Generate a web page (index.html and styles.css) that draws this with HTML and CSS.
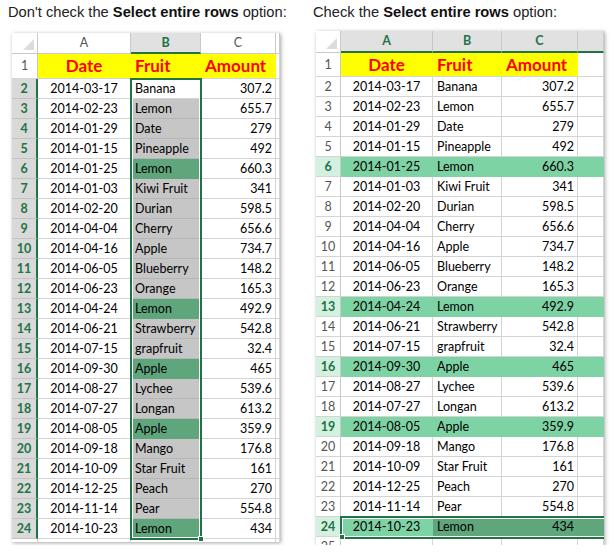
FILE: index.html
```html
<!DOCTYPE html>
<html>
<head>
<meta charset="utf-8">
<link rel="stylesheet" href="styles.css">
</head>
<body>
<div class="page">
  <section class="panel panel-l">
    <p class="caption">Don't check the <b>Select entire rows</b> option:</p>
    <div class="sheet sheet-l">
      <div class="r hdr"><div class="c corner"><span class="tri"></span></div><div class="c hc">A</div><div class="c hc on">B</div><div class="c hc">C</div><div class="c hc x"></div></div>
      <div class="r r1"><div class="c n">1</div><div class="c t tc">Date</div><div class="c t">Fruit</div><div class="c t">Amount</div><div class="c x"></div></div>
      <div class="r s act"><div class="c n">2</div><div class="c d">2014-03-17</div><div class="c f">Banana</div><div class="c a">307.2</div><div class="c x"></div></div>
      <div class="r s"><div class="c n">3</div><div class="c d">2014-02-23</div><div class="c f">Lemon</div><div class="c a">655.7</div><div class="c x"></div></div>
      <div class="r s"><div class="c n">4</div><div class="c d">2014-01-29</div><div class="c f">Date</div><div class="c a">279</div><div class="c x"></div></div>
      <div class="r s"><div class="c n">5</div><div class="c d">2014-01-15</div><div class="c f">Pineapple</div><div class="c a">492</div><div class="c x"></div></div>
      <div class="r s g"><div class="c n">6</div><div class="c d">2014-01-25</div><div class="c f">Lemon</div><div class="c a">660.3</div><div class="c x"></div></div>
      <div class="r s"><div class="c n">7</div><div class="c d">2014-01-03</div><div class="c f">Kiwi Fruit</div><div class="c a">341</div><div class="c x"></div></div>
      <div class="r s"><div class="c n">8</div><div class="c d">2014-02-20</div><div class="c f">Durian</div><div class="c a">598.5</div><div class="c x"></div></div>
      <div class="r s"><div class="c n">9</div><div class="c d">2014-04-04</div><div class="c f">Cherry</div><div class="c a">656.6</div><div class="c x"></div></div>
      <div class="r s"><div class="c n">10</div><div class="c d">2014-04-16</div><div class="c f">Apple</div><div class="c a">734.7</div><div class="c x"></div></div>
      <div class="r s"><div class="c n">11</div><div class="c d">2014-06-05</div><div class="c f">Blueberry</div><div class="c a">148.2</div><div class="c x"></div></div>
      <div class="r s"><div class="c n">12</div><div class="c d">2014-06-23</div><div class="c f">Orange</div><div class="c a">165.3</div><div class="c x"></div></div>
      <div class="r s g"><div class="c n">13</div><div class="c d">2014-04-24</div><div class="c f">Lemon</div><div class="c a">492.9</div><div class="c x"></div></div>
      <div class="r s"><div class="c n">14</div><div class="c d">2014-06-21</div><div class="c f">Strawberry</div><div class="c a">542.8</div><div class="c x"></div></div>
      <div class="r s"><div class="c n">15</div><div class="c d">2014-07-15</div><div class="c f">grapfruit</div><div class="c a">32.4</div><div class="c x"></div></div>
      <div class="r s g"><div class="c n">16</div><div class="c d">2014-09-30</div><div class="c f">Apple</div><div class="c a">465</div><div class="c x"></div></div>
      <div class="r s"><div class="c n">17</div><div class="c d">2014-08-27</div><div class="c f">Lychee</div><div class="c a">539.6</div><div class="c x"></div></div>
      <div class="r s"><div class="c n">18</div><div class="c d">2014-07-27</div><div class="c f">Longan</div><div class="c a">613.2</div><div class="c x"></div></div>
      <div class="r s g"><div class="c n">19</div><div class="c d">2014-08-05</div><div class="c f">Apple</div><div class="c a">359.9</div><div class="c x"></div></div>
      <div class="r s"><div class="c n">20</div><div class="c d">2014-09-18</div><div class="c f">Mango</div><div class="c a">176.8</div><div class="c x"></div></div>
      <div class="r s"><div class="c n">21</div><div class="c d">2014-10-09</div><div class="c f">Star Fruit</div><div class="c a">161</div><div class="c x"></div></div>
      <div class="r s"><div class="c n">22</div><div class="c d">2014-12-25</div><div class="c f">Peach</div><div class="c a">270</div><div class="c x"></div></div>
      <div class="r s"><div class="c n">23</div><div class="c d">2014-11-14</div><div class="c f">Pear</div><div class="c a">554.8</div><div class="c x"></div></div>
      <div class="r s g"><div class="c n">24</div><div class="c d">2014-10-23</div><div class="c f">Lemon</div><div class="c a">434</div><div class="c x"></div></div>
      <div class="r"><div class="c n"></div><div class="c d"></div><div class="c f"></div><div class="c a"></div><div class="c x"></div></div>
      <div class="selbox sel-l"><span class="handle"></span></div>
    </div>
  </section>

  <section class="panel panel-r">
    <p class="caption">Check the <b>Select entire rows</b> option:</p>
    <div class="sheet sheet-r">
      <div class="r hdr"><div class="c corner"><span class="tri"></span></div><div class="c hc on">A</div><div class="c hc on">B</div><div class="c hc on">C</div><div class="c hc on x"></div></div>
      <div class="r r1"><div class="c n">1</div><div class="c t tc">Date</div><div class="c t">Fruit</div><div class="c t">Amount</div><div class="c x"></div></div>
      <div class="r"><div class="c n">2</div><div class="c d">2014-03-17</div><div class="c f">Banana</div><div class="c a">307.2</div><div class="c x"></div></div>
      <div class="r"><div class="c n">3</div><div class="c d">2014-02-23</div><div class="c f">Lemon</div><div class="c a">655.7</div><div class="c x"></div></div>
      <div class="r"><div class="c n">4</div><div class="c d">2014-01-29</div><div class="c f">Date</div><div class="c a">279</div><div class="c x"></div></div>
      <div class="r"><div class="c n">5</div><div class="c d">2014-01-15</div><div class="c f">Pineapple</div><div class="c a">492</div><div class="c x"></div></div>
      <div class="r hl"><div class="c n">6</div><div class="c d">2014-01-25</div><div class="c f">Lemon</div><div class="c a">660.3</div><div class="c x"></div></div>
      <div class="r"><div class="c n">7</div><div class="c d">2014-01-03</div><div class="c f">Kiwi Fruit</div><div class="c a">341</div><div class="c x"></div></div>
      <div class="r"><div class="c n">8</div><div class="c d">2014-02-20</div><div class="c f">Durian</div><div class="c a">598.5</div><div class="c x"></div></div>
      <div class="r"><div class="c n">9</div><div class="c d">2014-04-04</div><div class="c f">Cherry</div><div class="c a">656.6</div><div class="c x"></div></div>
      <div class="r"><div class="c n">10</div><div class="c d">2014-04-16</div><div class="c f">Apple</div><div class="c a">734.7</div><div class="c x"></div></div>
      <div class="r"><div class="c n">11</div><div class="c d">2014-06-05</div><div class="c f">Blueberry</div><div class="c a">148.2</div><div class="c x"></div></div>
      <div class="r"><div class="c n">12</div><div class="c d">2014-06-23</div><div class="c f">Orange</div><div class="c a">165.3</div><div class="c x"></div></div>
      <div class="r hl"><div class="c n">13</div><div class="c d">2014-04-24</div><div class="c f">Lemon</div><div class="c a">492.9</div><div class="c x"></div></div>
      <div class="r"><div class="c n">14</div><div class="c d">2014-06-21</div><div class="c f">Strawberry</div><div class="c a">542.8</div><div class="c x"></div></div>
      <div class="r"><div class="c n">15</div><div class="c d">2014-07-15</div><div class="c f">grapfruit</div><div class="c a">32.4</div><div class="c x"></div></div>
      <div class="r hl"><div class="c n">16</div><div class="c d">2014-09-30</div><div class="c f">Apple</div><div class="c a">465</div><div class="c x"></div></div>
      <div class="r"><div class="c n">17</div><div class="c d">2014-08-27</div><div class="c f">Lychee</div><div class="c a">539.6</div><div class="c x"></div></div>
      <div class="r"><div class="c n">18</div><div class="c d">2014-07-27</div><div class="c f">Longan</div><div class="c a">613.2</div><div class="c x"></div></div>
      <div class="r hl"><div class="c n">19</div><div class="c d">2014-08-05</div><div class="c f">Apple</div><div class="c a">359.9</div><div class="c x"></div></div>
      <div class="r"><div class="c n">20</div><div class="c d">2014-09-18</div><div class="c f">Mango</div><div class="c a">176.8</div><div class="c x"></div></div>
      <div class="r"><div class="c n">21</div><div class="c d">2014-10-09</div><div class="c f">Star Fruit</div><div class="c a">161</div><div class="c x"></div></div>
      <div class="r"><div class="c n">22</div><div class="c d">2014-12-25</div><div class="c f">Peach</div><div class="c a">270</div><div class="c x"></div></div>
      <div class="r"><div class="c n">23</div><div class="c d">2014-11-14</div><div class="c f">Pear</div><div class="c a">554.8</div><div class="c x"></div></div>
      <div class="r cur"><div class="c n">24</div><div class="c d">2014-10-23</div><div class="c f">Lemon</div><div class="c a">434</div><div class="c x"></div></div>
      <div class="r"><div class="c n">25</div><div class="c d"></div><div class="c f"></div><div class="c a"></div><div class="c x"></div></div>
      <div class="selbox sel-r"><span class="handle"></span></div>
    </div>
  </section>
</div>
</body>
</html>
```

FILE: styles.css
```css
* { box-sizing: border-box; }

body {
  margin: 0;
  background: #fff;
  font-family: "Liberation Sans", Arial, sans-serif;
}

.page {
  display: grid;
  grid-template-columns: 305px 309px;
}

.panel {
  display: flex;
  flex-direction: column;
  align-items: flex-start;
}

.caption {
  margin: 0;
  padding: 3px 0 0 8px;
  font-size: 14.7px;
  line-height: 18px;
  color: #222;
  white-space: nowrap;
}

.caption b { font-weight: bold; color: #111; }

.sheet {
  position: relative;
  display: grid;
  overflow: hidden;
  font-family: Lato, "Open Sans", sans-serif;
  font-size: 12.5px;
  line-height: 19px;
  color: #000;
  background: #fff;
  box-shadow: 1px 1px 4px rgba(0, 0, 0, 0.35);
}

.sheet-l {
  margin: 12px 0 0 12px;
  width: 268px;
  height: 509px;
  grid-template-columns: 26px 93px 70px 75px 4px;
  grid-template-rows: 21px 25px;
  grid-auto-rows: 20px;
}

.sheet-r {
  margin: 10px 0 0 11px;
  width: 288px;
  height: 514px;
  grid-template-columns: 25px 92px 69px 76px 26px;
  grid-template-rows: 22px 24px;
  grid-auto-rows: 20px;
}

.r { display: contents; }

.c {
  border-right: 1px solid #d4d4d4;
  border-bottom: 1px solid #d4d4d4;
  overflow: hidden;
  white-space: nowrap;
  padding: 0 3px;
}

/* column header row */
.hc {
  text-align: center;
  color: #555;
  line-height: 20px;
  background: #fff;
  border-right-color: #c9c9c9;
  border-bottom-color: #c9c9c9;
}

.hc.on {
  background: #e1e1e1;
  color: #217346;
  font-weight: bold;
  border-bottom: 2px solid #217346;
}

.corner {
  display: flex;
  align-items: flex-end;
  justify-content: flex-end;
  padding: 0 3px 3px 0;
  border-right-color: #c9c9c9;
  border-bottom-color: #c9c9c9;
}

.tri {
  width: 0;
  height: 0;
  border-left: 11px solid transparent;
  border-bottom: 11px solid #dcdcdc;
}

/* row numbers */
.n {
  text-align: center;
  color: #555;
  padding: 0;
  border-right-color: #c9c9c9;
}

/* title row */
.t {
  background: #ffff00;
  border-right-color: #ffff00;
  color: #ff0000;
  font-weight: bold;
  font-size: 17px;
  line-height: 22px;
  padding: 1px 4px 0;
}

.r1 > .n { line-height: 24px; }

.tc { text-align: center; }

.d { text-align: center; }
.f { padding-left: 4px; padding-right: 0; }
.a { text-align: right; }
.x { padding: 0; }

/* left sheet: column B selected */
.s > .n {
  background: #d9d9d9;
  color: #217346;
  font-weight: bold;
  border-right: 2px solid #217346;
  border-bottom-color: #c2c2c2;
}

.s > .f {
  background: #c6c6c6;
  border-bottom-color: #b6b6b6;
}

.s.act > .f { background: #fff; border-bottom-color: #d4d4d4; }
.s.g > .f { background: #5fa67d; border-bottom-color: #5fa67d; }

/* right sheet: entire rows selected */
.hl > .n,
.cur > .n {
  background: #d3f0e0;
  color: #217346;
  font-weight: bold;
}

.hl > .d,
.hl > .f,
.hl > .a,
.hl > .x {
  background: #7ed3a5;
  border-color: #7ed3a5;
}

.cur > .d {
  background: #7ed3a5;
  border-color: #7ed3a5;
}

.cur > .f,
.cur > .a,
.cur > .x {
  background: #5fa67d;
  border-color: #5fa67d;
}

/* selection outlines */
.selbox {
  position: absolute;
  border: 2px solid #217346;
  box-shadow: inset 0 0 0 1px #fff;
  pointer-events: none;
}

.sel-l { left: 118px; top: 45px; width: 72px; height: 462px; }
.sel-r { left: 24px; top: 485px; width: 272px; height: 23px; }

.handle {
  position: absolute;
  width: 6px;
  height: 6px;
  background: #217346;
  border: 1px solid #fff;
}

.sel-l .handle { right: -4px; bottom: -4px; }
.sel-r .handle { left: -3px; bottom: -3px; }
```
